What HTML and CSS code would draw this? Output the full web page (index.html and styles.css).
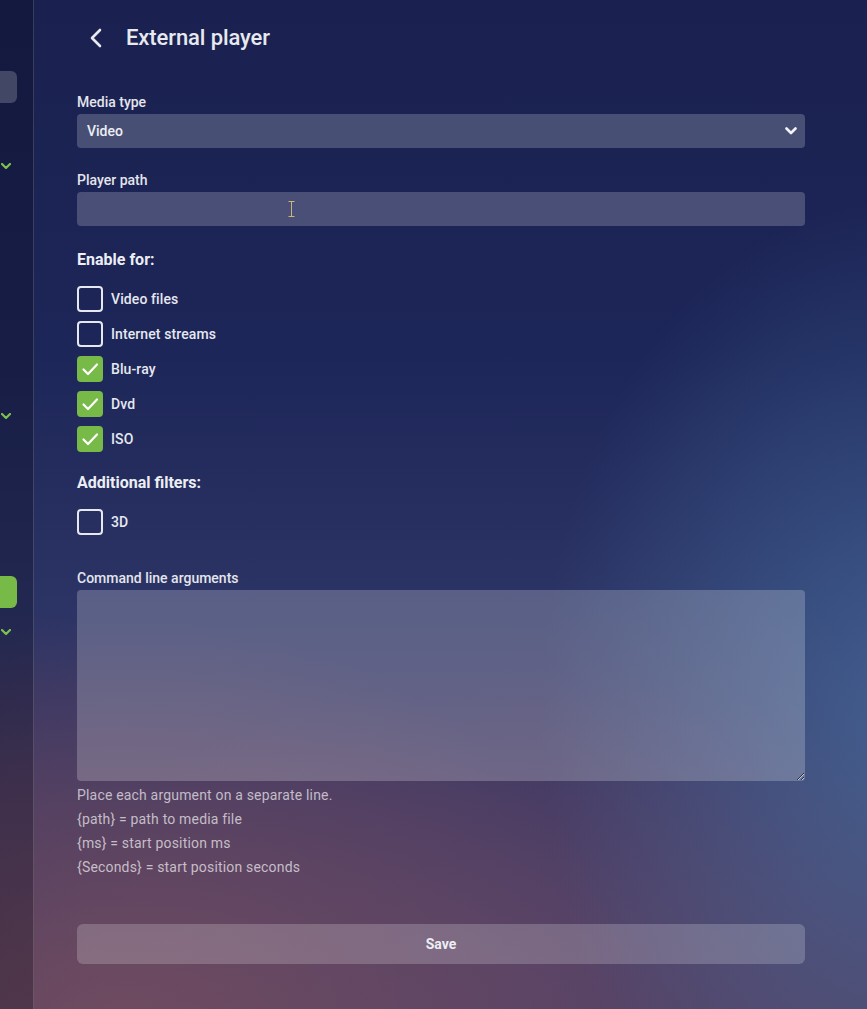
FILE: index.html
```html
<!DOCTYPE html>
<html lang="en">
<head>
<meta charset="utf-8">
<title>External player</title>
<link rel="stylesheet" href="styles.css">
</head>
<body>
<div class="app">
  <aside class="sidebar">
    <div class="side-pill side-pill-gray"></div>
    <svg class="side-chev chev-1" viewBox="0 0 10 6"><path d="M1 1 L5 5 L9 1" /></svg>
    <svg class="side-chev chev-2" viewBox="0 0 10 6"><path d="M1 1 L5 5 L9 1" /></svg>
    <div class="side-pill side-pill-green"></div>
    <svg class="side-chev chev-3" viewBox="0 0 10 6"><path d="M1 1 L5 5 L9 1" /></svg>
  </aside>
  <main class="main">
    <header class="header">
      <button class="back" aria-label="Back">
        <svg viewBox="0 0 14 20"><path d="M11 2 L3 10 L11 18" /></svg>
      </button>
      <h1 class="title">External player</h1>
    </header>

    <form class="form">
      <label class="field-label lbl-media">Media type</label>
      <div class="select">
        <span>Video</span>
        <svg class="select-chev" viewBox="0 0 12 8"><path d="M1.5 1.5 L6 6 L10.5 1.5" /></svg>
      </div>

      <label class="field-label lbl-path">Player path</label>
      <div class="input">
        <svg class="ibeam" viewBox="0 0 7 16"><path d="M0.5 0.5 H6.5 M3.5 0.5 V15.5 M0.5 15.5 H6.5" /></svg>
      </div>

      <h2 class="section-title st-enable">Enable for:</h2>
      <div class="checks">
        <div class="check"><span class="box"></span><span class="check-label">Video files</span></div>
        <div class="check"><span class="box"></span><span class="check-label">Internet streams</span></div>
        <div class="check"><span class="box on"><svg viewBox="0 0 26 26"><path d="M6.5 13.5 L11 18 L20 8.5" /></svg></span><span class="check-label">Blu-ray</span></div>
        <div class="check"><span class="box on"><svg viewBox="0 0 26 26"><path d="M6.5 13.5 L11 18 L20 8.5" /></svg></span><span class="check-label">Dvd</span></div>
        <div class="check"><span class="box on"><svg viewBox="0 0 26 26"><path d="M6.5 13.5 L11 18 L20 8.5" /></svg></span><span class="check-label">ISO</span></div>
      </div>

      <h2 class="section-title st-filters">Additional filters:</h2>
      <div class="checks">
        <div class="check"><span class="box"></span><span class="check-label">3D</span></div>
      </div>

      <label class="field-label lbl-args">Command line arguments</label>
      <textarea class="textarea"></textarea>
      <div class="help">
        <div>Place each argument on a separate line.</div>
        <div>{path} = path to media file</div>
        <div>{ms} = start position ms</div>
        <div>{Seconds} = start position seconds</div>
      </div>

      <button type="button" class="save">Save</button>
    </form>
  </main>
</div>
</body>
</html>
```

FILE: styles.css
```css
* { box-sizing: border-box; }

html, body {
  margin: 0;
  height: 100%;
}

body {
  font-family: Roboto, "Noto Sans", "Liberation Sans", sans-serif;
  color: #e6e7ef;
  background:
    radial-gradient(ellipse 520px 420px at 120px 1040px, rgba(120, 78, 95, 0.8), rgba(120, 78, 95, 0) 100%),
    radial-gradient(ellipse 360px 520px at 900px 720px, rgba(70, 110, 160, 0.7), rgba(70, 110, 160, 0) 100%),
    radial-gradient(ellipse 500px 300px at 520px 980px, rgba(95, 70, 105, 0.6), rgba(95, 70, 105, 0) 100%),
    linear-gradient(180deg, #1a2150 0%, #1d2658 35%, #2c3465 60%, #433a63 80%, #4f4063 100%);
  overflow: hidden;
}

.app {
  display: flex;
  min-height: 1009px;
}

/* ---------- sidebar ---------- */
.sidebar {
  width: 34px;
  flex: none;
  border-right: 1px solid rgba(255, 255, 255, 0.16);
  background: linear-gradient(180deg, rgba(8, 10, 30, 0.35) 0%, rgba(10, 10, 30, 0.3) 60%, rgba(20, 10, 20, 0.3) 100%);
  display: flex;
  flex-direction: column;
  overflow: hidden;
}

.side-pill {
  width: 30px;
  height: 32px;
  margin-left: -13px;
  border-radius: 6px;
  flex: none;
}

.side-pill-gray {
  background: rgba(255, 255, 255, 0.2);
  margin-top: 71px;
}

.side-pill-green {
  background: #78ba48;
  margin-top: 157px;
}

.side-chev {
  width: 10px;
  height: 6px;
  margin-left: 1px;
  flex: none;
  fill: none;
  stroke: #7cc24c;
  stroke-width: 2.2;
  stroke-linecap: round;
  stroke-linejoin: round;
}

.chev-1 { margin-top: 60px; }
.chev-2 { margin-top: 244px; }
.chev-3 { margin-top: 21px; }

/* ---------- main ---------- */
.main {
  flex: 1;
  padding: 0 61px 0 43px;
}

.header {
  height: 75px;
  display: flex;
  align-items: center;
}

.back {
  background: none;
  border: 0;
  padding: 0;
  margin: 0 0 0 12px;
  width: 16px;
  height: 20px;
  display: flex;
  cursor: pointer;
}

.back svg {
  width: 14px;
  height: 20px;
  fill: none;
  stroke: #e8e9f0;
  stroke-width: 2.6;
  stroke-linecap: round;
  stroke-linejoin: round;
}

.title {
  margin: 0 0 0 21px;
  font-size: 22px;
  font-weight: 500;
  color: #e8e9f0;
  letter-spacing: -0.1px;
}

.form {
  display: flex;
  flex-direction: column;
  width: 728px;
}

.field-label {
  font-size: 14px;
  font-weight: 500;
  line-height: 18px;
  color: #e4e5ec;
  margin-bottom: 3px;
}

.lbl-media { margin-top: 18px; }
.lbl-path { margin-top: 23px; }
.lbl-args { margin-top: 34px; }

.select,
.input {
  position: relative;
  height: 34px;
  border-radius: 4px;
  background: rgba(255, 255, 255, 0.2);
  display: flex;
  align-items: center;
  padding: 0 10px;
  font-size: 14px;
  font-weight: 500;
  color: #eceef4;
}

.select span { flex: 1; }

.select-chev {
  width: 12px;
  height: 8px;
  margin-right: -2px;
  fill: none;
  stroke: #f2f3f7;
  stroke-width: 2.6;
  stroke-linecap: round;
  stroke-linejoin: round;
}

.ibeam {
  position: absolute;
  left: 211px;
  top: 9px;
  width: 7px;
  height: 16px;
  fill: none;
  stroke: #cdb47d;
  stroke-width: 1;
}

.section-title {
  font-size: 16px;
  font-weight: 700;
  line-height: 19px;
  margin: 0;
  color: #eceef4;
}

.st-enable { margin-top: 24px; margin-bottom: 17px; }
.st-filters { margin-top: 21px; margin-bottom: 17px; }

.checks {
  display: flex;
  flex-direction: column;
  gap: 9px;
}

.check {
  display: flex;
  align-items: center;
  height: 26px;
}

.box {
  width: 26px;
  height: 26px;
  border: 2px solid #e6e8f0;
  border-radius: 4px;
  flex: none;
  display: flex;
}

.box.on {
  border-color: #78ba48;
  background: #78ba48;
}

.box svg {
  width: 26px;
  height: 26px;
  margin: -2px;
  fill: none;
  stroke: #ffffff;
  stroke-width: 2.2;
  stroke-linecap: round;
  stroke-linejoin: round;
}

.check-label {
  margin-left: 8px;
  font-size: 14px;
  font-weight: 500;
  letter-spacing: 0.1px;
  color: #e6e8f0;
}

.textarea {
  display: block;
  width: 728px;
  height: 191px;
  border: 0;
  border-radius: 4px;
  background: rgba(255, 255, 255, 0.22);
  color: #fff;
  font-family: inherit;
  font-size: 14px;
  padding: 8px 10px;
  margin: 0;
  outline: none;
}

.help {
  font-size: 14px;
  line-height: 24px;
  letter-spacing: 0.18px;
  color: rgba(255, 255, 255, 0.66);
  margin-top: 2px;
}

.save {
  margin-top: 45px;
  height: 40px;
  width: 728px;
  border: 0;
  border-radius: 6px;
  background: rgba(255, 255, 255, 0.2);
  color: #eceef4;
  font-family: inherit;
  font-size: 14px;
  font-weight: 700;
  cursor: pointer;
}
```
